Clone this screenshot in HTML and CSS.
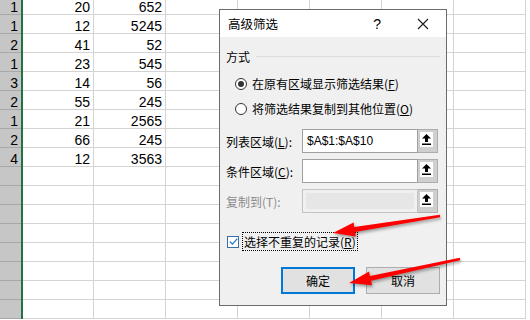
FILE: index.html
```html
<!DOCTYPE html>
<html lang="zh-CN">
<head>
  <meta charset="UTF-8">
  <title>高级筛选</title>
  <link rel="stylesheet" href="styles.css">
</head>
<body>
  <div class="sheet">
    <div class="hdr-col" id="hdr"></div>
    <div class="green-bar"></div>
    <div class="grid" id="grid"></div>
  </div>

  <div class="dialog">
    <div class="title-bar">
      <span class="title">高级筛选</span>
      <span class="help">?</span>
      <svg class="close" width="12" height="12" viewBox="0 0 12 12">
        <path d="M1 1 L11 11 M11 1 L1 11" stroke="#222" stroke-width="1.2" fill="none"/>
      </svg>
    </div>
    <div class="dlg-body">
      <div class="group-head">
        <span>方式</span>
        <div class="group-line"></div>
      </div>
      <div class="radio-row">
        <span class="radio checked"></span>
        <span>在原有区域显示筛选结果(<u>F</u>)</span>
      </div>
      <div class="radio-row">
        <span class="radio"></span>
        <span>将筛选结果复制到其他位置(<u>O</u>)</span>
      </div>

      <div class="fields">
        <div class="field">
          <label>列表区域(<u>L</u>):</label>
          <div class="input">$A$1:$A$10</div>
          <div class="pick"><div class="pick-face"><svg width="9" height="11" viewBox="0 0 9 11"><path d="M4.5 0 L9 4.5 L6 4.5 L6 8 L3 8 L3 4.5 L0 4.5 Z M0 9.5 H9 V11 H0 Z" fill="#000"/></svg></div></div>
        </div>
        <div class="field">
          <label>条件区域(<u>C</u>):</label>
          <div class="input"></div>
          <div class="pick"><div class="pick-face"><svg width="9" height="11" viewBox="0 0 9 11"><path d="M4.5 0 L9 4.5 L6 4.5 L6 8 L3 8 L3 4.5 L0 4.5 Z M0 9.5 H9 V11 H0 Z" fill="#000"/></svg></div></div>
        </div>
        <div class="field disabled">
          <label>复制到(T):</label>
          <div class="input"><div class="input-fill"></div></div>
          <div class="pick"><div class="pick-face"><svg width="9" height="11" viewBox="0 0 9 11"><path d="M4.5 0 L9 4.5 L6 4.5 L6 8 L3 8 L3 4.5 L0 4.5 Z M0 9.5 H9 V11 H0 Z" fill="#000"/></svg></div></div>
        </div>
      </div>

      <div class="check-row">
        <span class="checkbox"><svg width="9" height="9" viewBox="0 0 9 9"><path d="M0.8 4.6 L3.4 7.2 L8.3 1.6" stroke="#1a73c9" stroke-width="1.2" fill="none"/></svg></span>
        <span class="focus">选择不重复的记录(<u>R</u>)</span>
      </div>

      <div class="buttons">
        <button class="btn primary">确定</button>
        <button class="btn">取消</button>
      </div>
    </div>
  </div>

  <svg class="arrows" width="530" height="320" viewBox="0 0 530 320">
    <polygon points="439.8,214.8 354.3,227.0 353.6,222.6 333,233 355.8,236.4 355.1,232.0 440.2,217.2" fill="#ff0000"/>
    <polygon points="459.75,257.83 369.97,275.96 369.0,271.6 349,283 372.0,285.2 371.03,280.84 460.25,260.17" fill="#ff0000"/>
  </svg>

  <script>
    const data = [
      [1, 20, 652], [1, 12, 5245], [2, 41, 52], [1, 23, 545], [3, 14, 56],
      [2, 55, 245], [1, 21, 2565], [2, 66, 245], [4, 12, 3563]
    ];
    const hdr = document.getElementById("hdr");
    const grid = document.getElementById("grid");

    for (let i = 0; i < 17; i++) {
      const rowData = data[i] || ["", "", ""];

      const h = document.createElement("div");
      h.className = "hdr-cell";
      h.textContent = rowData[0];
      hdr.appendChild(h);

      const row = document.createElement("div");
      row.className = "row";
      for (let c = 0; c < 7; c++) {
        const cell = document.createElement("div");
        cell.className = "cell";
        if (c < 2) cell.textContent = rowData[c + 1];
        row.appendChild(cell);
      }
      grid.appendChild(row);
    }
  </script>
</body>
</html>
```

FILE: styles.css
```css
body {
  margin: 0;
  background: #fff;
  font-family: "Liberation Sans", Arial, sans-serif;
  overflow: hidden;
  width: 530px;
  height: 320px;
  position: relative;
}

/* sheet */
.sheet {
  display: flex;
  margin-top: -4px;
}

.hdr-col {
  width: 21px;
  flex: none;
  background: #c6c6c6;
}

.hdr-cell, .cell {
  box-sizing: border-box;
  height: 19px;
  padding: 2px 3px 0 0;
  line-height: 18px;
  font-size: 14px;
  text-align: right;
  color: #000;
}

.hdr-cell {
  border-bottom: 1px solid #a8a8a8;
}

.green-bar {
  width: 2px;
  flex: none;
  background: #217346;
}

.row {
  display: flex;
}

.cell {
  flex: none;
  width: 72px;
  border-right: 1px solid #d4d4d4;
  border-bottom: 1px solid #d4d4d4;
  padding-right: 3px;
}

.row .cell:first-child {
  width: 71px;
}

/* dialog */
.dialog {
  position: absolute;
  left: 219px;
  top: 9px;
  width: 228px;
  height: 297px;
  box-sizing: border-box;
  border: 1px solid #6b6b6b;
  background: #f0f0f0;
  font-family: "Noto Sans CJK SC", "Liberation Sans", sans-serif;
  font-size: 12px;
  color: #000;
}

.title-bar {
  height: 27px;
  background: #fff;
  display: flex;
  align-items: center;
  padding-left: 8px;
}

.title {
  font-size: 12.5px;
  flex: 1;
}

.help {
  font-family: "Liberation Sans", sans-serif;
  font-size: 14px;
  margin-right: 36px;
}

.close {
  margin-right: 17px;
}

.dlg-body {
  display: flex;
  flex-direction: column;
  padding: 9px 7px 0 6px;
}

.group-head {
  height: 20px;
  display: flex;
  align-items: center;
}

.group-line {
  flex: 1;
  height: 1px;
  background: #dcdcdc;
  margin-left: 6px;
  margin-right: -1px;
}

.radio-row {
  height: 25px;
  display: flex;
  align-items: center;
  padding-left: 9px;
}

.group-head + .radio-row {
  margin-top: 5px;
}

.radio {
  width: 12px;
  height: 12px;
  box-sizing: border-box;
  border: 1px solid #333;
  border-radius: 50%;
  background: #fff;
  margin-right: 5px;
  display: flex;
  align-items: center;
  justify-content: center;
}

.radio.checked::after {
  content: "";
  width: 6px;
  height: 6px;
  border-radius: 50%;
  background: #333;
}

u {
  text-decoration: underline;
  text-underline-offset: 1px;
}

.fields {
  display: flex;
  flex-direction: column;
  gap: 6px;
  margin-top: 8px;
}

.field {
  display: flex;
  align-items: center;
  height: 24px;
}

.field label {
  width: 76px;
}

.field.disabled label {
  color: #8c8c8c;
}

.input {
  box-sizing: border-box;
  width: 116px;
  height: 24px;
  border: 1px solid #a0a0a0;
  background: #fff;
  font-family: "Liberation Sans", sans-serif;
  font-size: 12px;
  line-height: 22px;
  padding-left: 4px;
}

.field.disabled .input {
  background: #f0f0f0;
  border-color: #c4c4c4;
  padding: 3px;
}

.input-fill {
  height: 16px;
  background: #e6e6e6;
}

.pick {
  box-sizing: border-box;
  width: 20px;
  height: 24px;
  border: 1px solid #adadad;
  border-left: none;
  background: #cfcfcf;
  padding: 2px 4px 5px 2px;
}

.pick-face {
  background: #fff;
  height: 100%;
  display: flex;
  align-items: center;
  justify-content: center;
}

.check-row {
  display: flex;
  align-items: center;
  height: 19px;
  margin-top: 19px;
}

.checkbox {
  box-sizing: border-box;
  width: 12px;
  height: 12px;
  border: 1px solid #3a6ea5;
  background: #fff;
  margin-left: 1px;
  margin-right: 3px;
  display: flex;
  align-items: center;
  justify-content: center;
}

.focus {
  border: 1px dotted #000;
  padding: 0 1px;
  line-height: 17px;
}

.buttons {
  display: flex;
  justify-content: flex-end;
  gap: 11px;
  margin-top: 16px;
  margin-right: -1px;
}

.btn {
  box-sizing: border-box;
  width: 74px;
  height: 27px;
  background: #e1e1e1;
  border: 1px solid #adadad;
  font-family: "Noto Sans CJK SC", sans-serif;
  font-size: 12px;
  padding: 0;
  color: #000;
}

.btn.primary {
  border: 2px solid #0078d7;
}

/* red annotation arrows */
.arrows {
  position: absolute;
  left: 0;
  top: 0;
  pointer-events: none;
  filter: drop-shadow(1px 2px 1.5px rgba(0, 0, 0, 0.35));
}
```
